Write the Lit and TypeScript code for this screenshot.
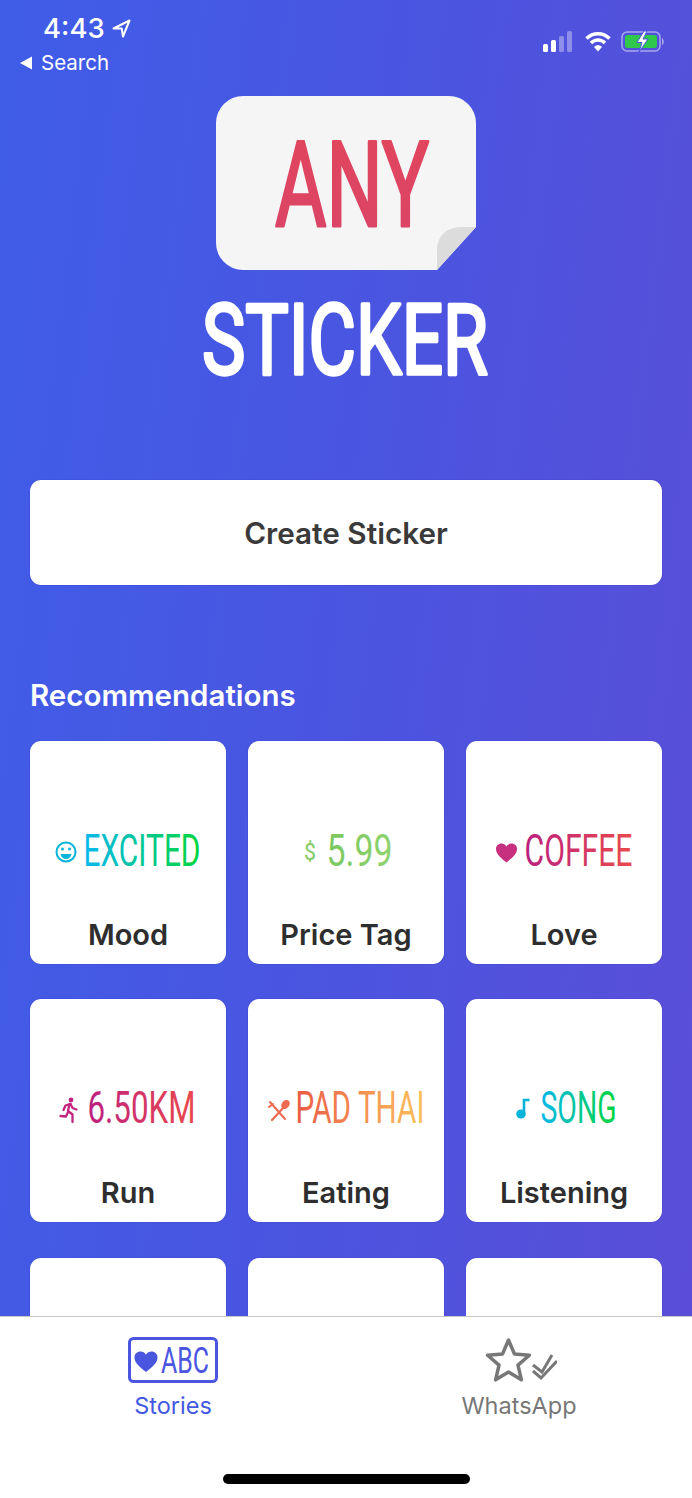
import { LitElement, html, css, svg } from "lit";
import { customElement } from "lit/decorators.js";

const ICONS: Record<string, any> = {
  smile: svg`<circle cx="36" cy="31" r="9.500" fill="none" stroke="#08b4d8" stroke-width="2"/><circle cx="32.500" cy="28" r="1.500" fill="#08b4d8"/><circle cx="39.500" cy="28" r="1.500" fill="#08b4d8"/><path d="M30.500 33h11c-.6 3.500-2.800 5-5.500 5s-4.900-1.500-5.500-5z" fill="#08b4d8"/>`,
  dollar: svg`<text x="56" y="39" font-size="24" font-family="Roboto, sans-serif" font-weight="400" fill="#84cc66" textLength="12" lengthAdjust="spacingAndGlyphs">$</text>`,
  heart: svg`<path d="M40.500 41.500c-5-4.200-10.500-8-10.500-13.500 0-3.200 2.400-5.500 5.400-5.500 2.100 0 4 1.100 5.100 3 1.100-1.900 3-3 5.100-3 3 0 5.400 2.300 5.400 5.500 0 5.500-5.500 9.300-10.500 13.500z" fill="#c6307f"/>`,
  run: svg`<g transform="translate(0 -13)"><g fill="none" stroke="#c2257f" stroke-width="2.300" stroke-linejoin="round" stroke-linecap="round"><path d="M40.500 39l-5 1.500-2 4.500"/><path d="M39.500 39l-1.500 7 4.500 3.500v7.500"/><path d="M38 47l-2 4.500-5.500-.5"/><path d="M40.500 39l2 4 4 1.500"/></g><circle cx="41" cy="35" r="2.400" fill="#c2257f"/></g>`,
  fork: svg`<g transform="translate(0 -12)"><g stroke="#ee6a50" stroke-width="2" fill="none" stroke-linecap="round"><path d="M22 36l15 17"/><path d="M21 41l4-3"/><path d="M36 41l-12 13" stroke-width="2.200"/></g><ellipse cx="37.500" cy="38.500" rx="3.800" ry="5" transform="rotate(38 37.500 38.500)" fill="#ee6a50"/></g>`,
  note: svg`<g transform="translate(0 -14)"><ellipse cx="55" cy="50" rx="4.800" ry="4.600" fill="#08b4d8"/><path d="M58 49V36h5.500" fill="none" stroke="#08b4d8" stroke-width="2.600"/></g>`,
};

type Tile = { label: string; text: string; x: number; w: number; c: string[]; icon: string };
const TILES: Tile[] = [
  { label: "Mood", text: "EXCITED", x: 53.500, w: 117, c: ["#08b8ee", "#00d63c"], icon: "smile" },
  { label: "Price Tag", text: "5.99", x: 78.500, w: 66, c: ["#7ac75e", "#8fd36e"], icon: "dollar" },
  { label: "Love", text: "COFFEE", x: 58.500, w: 108, c: ["#b9207f", "#ea4a4c"], icon: "heart" },
  { label: "Run", text: "6.50KM", x: 57.500, w: 108, c: ["#bc1f80", "#ea4a4c"], icon: "run" },
  { label: "Eating", text: "PAD THAI", x: 47.500, w: 129, c: ["#ea5a45", "#fdc25c"], icon: "fork" },
  { label: "Listening", text: "SONG", x: 74.500, w: 76, c: ["#08b8ee", "#00d63c"], icon: "note" },
];

@customElement("sticker-tile")
class StickerTile extends LitElement {
  static properties = { tile: { attribute: false }, idx: { type: Number } };
  tile!: Tile;
  idx = 0;
  static styles = css`
    :host { display: flex; flex-direction: column; align-items: center; height: 223px; box-sizing: border-box; background: #fff; border-radius: 11px; padding-top: 80px; box-shadow: 0 0 1px rgba(30, 30, 160, 0.8); }
    svg { display: block; width: 196px; height: 60px; }
    .label { font: 600 29px/34px Inter, sans-serif; color: #2e2e2e; margin-top: 37px; }
  `;
  render() {
    const t = this.tile;
    const id = "g" + this.idx;
    return html`<svg viewBox="0 0 196 60">
        <defs><linearGradient id=${id} gradientUnits="userSpaceOnUse" x1=${t.x} y1="0" x2=${t.x + t.w} y2="0">
          <stop offset="0" stop-color=${t.c[0]}></stop><stop offset="1" stop-color=${t.c[1]}></stop>
        </linearGradient></defs>
        <g transform="translate(0 ${this.idx > 2 ? -1 : 0})">
        ${ICONS[t.icon]}
        <text x=${t.x} y="45" font-family="Roboto, sans-serif" font-weight="400" font-size="44.500" fill="url(#${id})" textLength=${t.w} lengthAdjust="spacingAndGlyphs">${t.text}</text>
        </g>
      </svg>
      <div class="label">${t.label}</div>`;
  }
}

@customElement("app-root")
export class AppRoot extends LitElement {
  static styles = css`
    :host { display: block; width: 692px; height: 1498px; overflow: hidden; font-family: Inter, sans-serif; }
    .page { display: flex; flex-direction: column; height: 1498px; }
    .main { flex: 1; min-height: 0; overflow: hidden; background: linear-gradient(97deg, #3f5de8 0%, #4a55e0 50%, #5a4ed8 100%); }
    .status { display: flex; justify-content: space-between; height: 90px; box-sizing: border-box; padding: 12px 26px 0 19px; color: #fff; }
    .left { display: flex; flex-direction: column; }
    .time { display: flex; align-items: center; gap: 7px; padding-left: 24px; font: 500 27.500px/32px Inter, sans-serif; height: 32px; }
    .back { display: flex; align-items: center; gap: 8px; font: 400 20.500px/26px Inter, sans-serif; margin-top: 6px; }
    .right { display: flex; align-items: center; gap: 10px; height: 52px; padding-top: 5px; box-sizing: border-box; margin-top: 1px; }
    svg { display: block; }
    .hero { width: 320px; height: 300px; margin: 0 auto 90px; }
    .pad { padding: 0 30px; }
    .cta { display: flex; align-items: center; justify-content: center; height: 105px; background: #fff; border-radius: 11px; font: 600 29.700px/34px Inter, sans-serif; color: #3a3a3a; box-shadow: 0 0 1px rgba(30, 30, 160, 0.8); }
    h2 { margin: 93px 0 0; font: 600 29.500px/34px Inter, sans-serif; color: #fff; height: 63px; }
    .grid { display: grid; grid-template-columns: repeat(3, 196px); column-gap: 22px; row-gap: 35px; }
    .blank { height: 223px; margin-top: 1px; background: #fff; border-radius: 11px; box-shadow: 0 0 1px rgba(30, 30, 160, 0.8); }
    .bar { height: 182px; box-sizing: border-box; background: #fff; border-top: 1px solid #c9c9cc; display: flex; flex-direction: column; align-items: center; }
    .tabs { display: flex; width: 100%; height: 157px; }
    .tab { flex: 1; display: flex; flex-direction: column; align-items: center; padding-top: 20px; font: 400 23.500px/30px Inter, sans-serif; color: #777; }
    .tab.on { color: #4259e2; }
    .tab span { margin-top: 8px; }
    .home { width: 247px; height: 10px; border-radius: 5px; background: #000; }
  `;
  render() {
    return html`<div class="page">
      <div class="main">
        <div class="status">
          <div class="left">
            <div class="time">4:43
              <svg width="19" height="19" viewBox="0 0 19 19"><path d="M1.500 9.500L17.500 1.500l-6.500 16-1.300-8z" fill="none" stroke="#fff" stroke-width="2" stroke-linejoin="round"/></svg>
            </div>
            <div class="back">
              <svg width="14" height="14" viewBox="0 0 14 14"><path d="M1 7l12-6.500v13z" fill="#fff"/></svg>Search
            </div>
          </div>
          <div class="right">
            <svg width="32" height="21" viewBox="0 0 32 21"><rect x="0" y="13" width="5" height="8" rx="1.500" fill="#fff"/><rect x="8" y="9" width="5" height="12" rx="1.500" fill="#fff"/><rect x="16" y="5" width="5" height="16" rx="1.500" fill="#fff" fill-opacity=".35"/><rect x="24" y="0" width="5" height="21" rx="1.500" fill="#fff" fill-opacity=".35"/></svg>
            <svg width="26" height="21" viewBox="0 0 26 21" fill="none" stroke="#fff" stroke-width="3.500"><path d="M1.500 7.500C8 1 18 1 24.500 7.500"/><path d="M6 12c4-4 10-4 14 0"/><path d="M13 20.500l-4-4.500c2-2.200 6-2.200 8 0z" fill="#fff" stroke="none"/></svg>
            <svg width="45" height="21" viewBox="0 0 45 21"><rect x="1" y="1" width="38" height="19" rx="5" fill="none" stroke="#fff" stroke-opacity=".5" stroke-width="1.500"/><rect x="4" y="4" width="32" height="13" rx="2.500" fill="#30c84c"/><path d="M41 7c2 .5 2.500 6.500 0 7z" fill="#fff" fill-opacity=".5"/><path d="M23 0l-7 11.500h5l-3 9.500 9-13h-5l4-8z" fill="#fff" stroke="#4a55e0" stroke-width="1"/></svg>
          </div>
        </div>
        <svg class="hero" viewBox="0 0 320 300">
          <defs>
            <linearGradient id="any" x1="0" y1="0" x2="0" y2="1"><stop offset="0" stop-color="#e3465c"/><stop offset="1" stop-color="#d94468"/></linearGradient>
          </defs>
          <path d="M57 6h206a27 27 0 0 1 27 27v104l-39 43H57a27 27 0 0 1-27-27V33A27 27 0 0 1 57 6z" fill="#f5f5f6"/>
          <path d="M290 137l-39 43v-20c0-14 10-23 24-23z" fill="#dcdcdc"/>
          <text x="89" y="135.500" font-family="Roboto, sans-serif" font-weight="400" font-size="118" fill="url(#any)" stroke="url(#any)" stroke-width="3" stroke-linejoin="round" textLength="154" lengthAdjust="spacingAndGlyphs">ANY</text>
          <text x="16" y="284" font-family="Roboto, sans-serif" font-weight="400" font-size="99" fill="#fff" stroke="#fff" stroke-width="3.500" stroke-linejoin="round" textLength="286" lengthAdjust="spacingAndGlyphs">STICKER</text>
        </svg>
        <div class="pad">
          <div class="cta">Create Sticker</div>
          <h2>Recommendations</h2>
          <div class="grid">
            ${TILES.map((t, i) => html`<sticker-tile .tile=${t} .idx=${i}></sticker-tile>`)}
            <div class="blank"></div><div class="blank"></div><div class="blank"></div>
          </div>
        </div>
      </div>
      <div class="bar">
        <div class="tabs">
          <div class="tab on">
            <svg width="90" height="46" viewBox="0 0 90 46">
              <rect x="1.500" y="1.500" width="87" height="43" rx="4" fill="none" stroke="#4a55e0" stroke-width="3"/>
              <path d="M18 35C12 30 6.500 26 6.500 20.500 6.500 17 9 14.500 12.500 14.500c2.300 0 4.300 1.100 5.500 3.200 1.200-2.100 3.200-3.200 5.500-3.200 3.500 0 6 2.500 6 6C29.500 26 24 30 18 35z" fill="#4a55e0"/>
              <text x="33" y="36" font-family="Roboto, sans-serif" font-size="36" fill="#4a55e0" textLength="48" lengthAdjust="spacingAndGlyphs">ABC</text>
            </svg>
            <span>Stories</span>
          </div>
          <div class="tab">
            <svg width="76" height="46" viewBox="0 0 76 46" fill="none" stroke="#777">
              <g transform="translate(2 0)">
                <path d="M25.500 3l5.900 13.900 15 1.300-11.400 9.900 3.400 14.700-12.900-7.800-12.900 7.800 3.400-14.700-11.400-9.900 15-1.300z" stroke-width="3.500" stroke-linejoin="round"/>
                <path d="M50 28l9 7 10-17" stroke-width="3"/>
                <path d="M50 34l8 7 16-17" stroke-width="3"/>
              </g>
            </svg>
            <span>WhatsApp</span>
          </div>
        </div>
        <div class="home"></div>
      </div>
    </div>`;
  }
}
void StickerTile;
